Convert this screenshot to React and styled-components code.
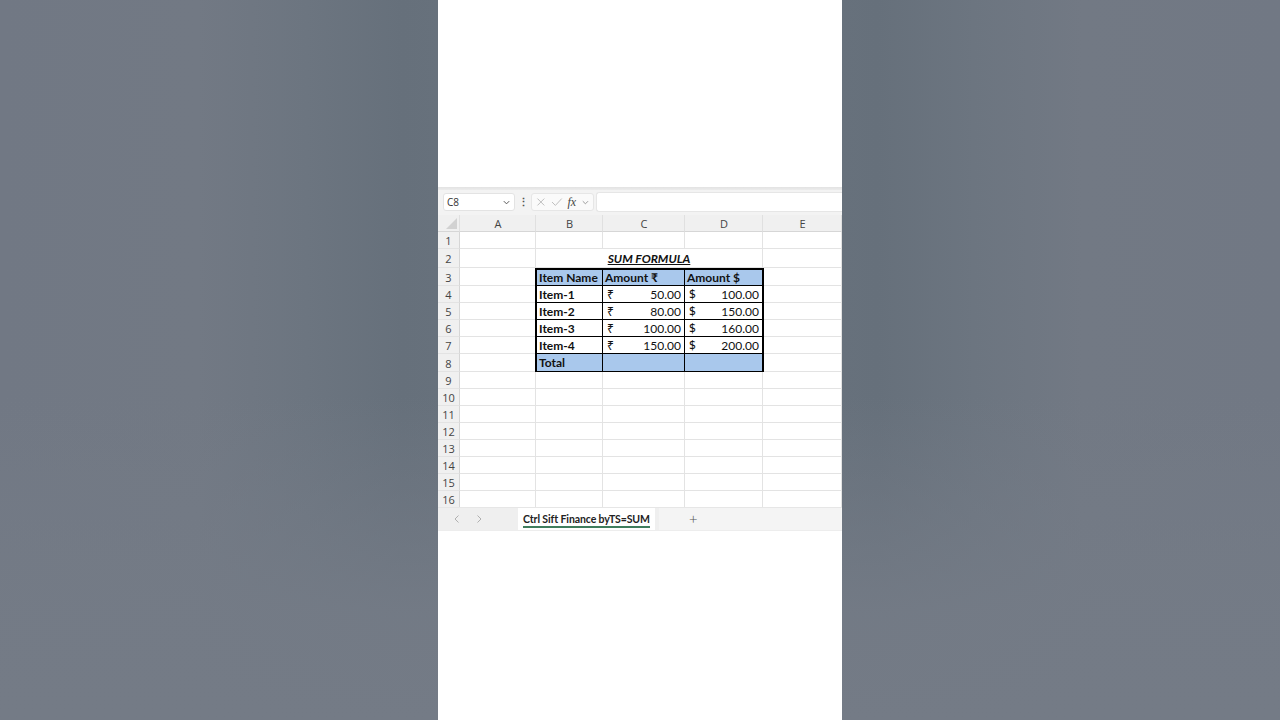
import React from "react";
import styled, { createGlobalStyle } from "styled-components";

const GlobalStyle = createGlobalStyle`
  html, body { margin: 0; padding: 0; }
  body { width: 1280px; height: 720px; overflow: hidden; background: #727984; font-family: "Open Sans", "Noto Sans", sans-serif; }
`;

const Page = styled.div`
  display: flex;
  width: 1280px;
  height: 720px;
`;

const Side = styled.div`
  flex: 0 0 438px;
  height: 720px;
  background:
    linear-gradient(to bottom, rgba(116,123,134,0) 55%, rgba(116,123,134,0.9) 85%, #747b86 100%),
    linear-gradient(${(p) => (p.$right ? "to left" : "to right")}, #717884 0%, #727984 45%, #6c7580 70%, #66707b 92%, #67717c 100%);
`;

const Center = styled.div`
  flex: 0 0 404px;
  display: flex;
  flex-direction: column;
  background: #ffffff;
`;

const TopBlank = styled.div`
  height: 187px;
  background: #ffffff;
`;

const RibbonEdge = styled.div`
  height: 3px;
  background: linear-gradient(to bottom, #e2e2e2, #ececec);
`;

const FormulaBar = styled.div`
  height: 25px;
  display: flex;
  align-items: center;
  padding: 0 0 1px 5px;
  background: #f3f3f3;
  box-sizing: border-box;
`;

const NameBox = styled.div`
  width: 72px;
  height: 18px;
  box-sizing: border-box;
  background: #fff;
  border: 1px solid #e3e3e3;
  border-radius: 3px;
  display: flex;
  align-items: center;
  justify-content: space-between;
  padding: 0 3px 0 3px;
  font-size: 10px;
  color: #333;
  font-family: "Open Sans", "Noto Sans", sans-serif;
`;

const Dots = styled.div`
  width: 16px;
  text-align: center;
  color: #555;
  font-size: 11px;
  font-weight: 700;
  line-height: 18px;
`;

const FxBox = styled.div`
  width: 63px;
  height: 18px;
  box-sizing: border-box;
  background: #fafafa;
  border: 1px solid #e6e6e6;
  border-radius: 3px;
  display: flex;
  align-items: center;
  gap: 5px;
  padding: 0 3px 0 4px;
`;

const FxText = styled.span`
  font-family: "Liberation Serif", "DejaVu Serif", serif;
  font-style: italic;
  font-size: 12px;
  color: #444;
  line-height: 1;
`;

const FormulaInput = styled.div`
  flex: 1;
  height: 18px;
  margin-left: 2px;
  background: #fff;
  border: 1px solid #e6e6e6;
  border-right: none;
  border-radius: 3px 0 0 3px;
`;

const Sheet = styled.div`
  display: grid;
  grid-template-columns: 22px 76px 67px 82px 78px 79px;
  grid-template-rows: 17px 17px 19px 18px 17px 17px 17px 17px 18px repeat(8, 17px);
  background: #fff;
  font-family: "Lato", "Noto Sans", sans-serif;
`;

const HeaderCell = styled.div`
  grid-row: 1;
  grid-column: ${(p) => p.$col};
  background: #f0f0f0;
  border-right: 1px solid #e0e0e0;
  border-bottom: 1px solid #d6d6d6;
  box-sizing: border-box;
  display: flex;
  align-items: center;
  justify-content: center;
  padding-left: 1px;
  font-family: "Open Sans", "Noto Sans", sans-serif;
  font-size: 11px;
  color: #444;
  position: relative;
`;

const Corner = styled.div`
  position: absolute;
  right: 2px;
  bottom: 2px;
  width: 0;
  height: 0;
  border-left: 11px solid transparent;
  border-bottom: 11px solid #d2d2d2;
`;

const RowHead = styled.div`
  grid-row: ${(p) => p.$row};
  grid-column: 1;
  background: #f0f0f0;
  border-right: 1px solid #d6d6d6;
  border-bottom: 1px solid #e3e3e3;
  box-sizing: border-box;
  display: flex;
  align-items: center;
  justify-content: center;
  padding-top: 1px;
  font-family: "Open Sans", "Noto Sans", sans-serif;
  font-size: 11px;
  color: #444;
`;

const Cell = styled.div`
  grid-row: ${(p) => p.$row};
  grid-column: ${(p) => p.$col};
  border-right: 1px solid #e3e3e3;
  border-bottom: 1px solid #e3e3e3;
  box-sizing: border-box;
`;

const TitleCell = styled.div`
  grid-row: 3;
  grid-column: 3 / 6;
  border-bottom: 1px solid #e3e3e3;
  border-right: 1px solid #e3e3e3;
  box-sizing: border-box;
  display: flex;
  align-items: center;
  justify-content: center;
  padding: 1px 0 0 0;
  font-size: 12px;
  font-weight: 700;
  font-style: italic;
  text-decoration: underline;
  color: #111;
`;

const Table = styled.div`
  grid-row: 4 / 10;
  grid-column: 3 / 6;
  border: 2px solid #000;
  box-sizing: border-box;
  margin: 0 -1px 0 -1px;
  display: grid;
  grid-template-columns: 66px 82px 77px;
  grid-template-rows: 16px 17px 17px 17px 17px 17px;
  background: #fff;
`;

const TCell = styled.div`
  box-sizing: border-box;
  border-right: ${(p) => (p.$last ? "none" : "1px solid #000")};
  border-bottom: ${(p) => (p.$bottom ? "none" : "1px solid #000")};
  background: ${(p) => (p.$fill ? "#a9c8ec" : "#fff")};
  display: flex;
  align-items: center;
  justify-content: space-between;
  padding: 0 3px 0 2px;
  font-size: 12px;
  font-weight: ${(p) => (p.$bold ? 700 : 400)};
  color: #111;
  white-space: nowrap;
  overflow: hidden;
`;

const Sym = styled.span`
  font-family: "Noto Sans", "DejaVu Sans", sans-serif;
  font-size: 12px;
  padding-left: 2px;
`;

const TabBar = styled.div`
  height: 23px;
  display: flex;
  align-items: stretch;
  background: #efefef;
  border-top: 1px solid #e6e6e6;
  box-sizing: border-box;
  margin-top: -1px;
`;

const NavArrows = styled.div`
  width: 80px;
  display: flex;
  align-items: center;
  gap: 14px;
  padding-left: 15px;
  box-sizing: border-box;
  color: #b5b5b5;
`;

const SheetTab = styled.div`
  width: 137px;
  box-sizing: border-box;
  background: #fff;
  display: flex;
  align-items: center;
  justify-content: center;
  font-family: "Lato", "Noto Sans", sans-serif;
  font-size: 10.5px;
  font-weight: 700;
  color: #222;
`;

const TabLabel = styled.span`
  border-bottom: 2px solid #3f7d5d;
  padding-bottom: 1px;
  margin-top: 3px;
  letter-spacing: -0.1px;
`;

const TabRest = styled.div`
  flex: 1;
  margin-left: 4px;
  background: #f4f4f4;
  display: flex;
  align-items: center;
  padding-left: 30px;
  color: #555;
  font-size: 15px;
  font-family: "Open Sans", sans-serif;
  font-weight: 300;
`;

const BottomBlank = styled.div`
  flex: 1;
  background: #fff;
  border-top: 1px solid #ededed;
`;

const Chevron = ({ color = "#555" }) => (
  <svg width="9" height="9" viewBox="0 0 10 10">
    <path d="M2 3.5 L5 6.5 L8 3.5" fill="none" stroke={color} strokeWidth="1.1" />
  </svg>
);

const CrossIcon = () => (
  <svg width="10" height="10" viewBox="0 0 10 10">
    <path d="M1.5 1.5 L8.5 8.5 M8.5 1.5 L1.5 8.5" stroke="#bdbdbd" strokeWidth="1" />
  </svg>
);

const CheckIcon = () => (
  <svg width="12" height="10" viewBox="0 0 12 10">
    <path d="M1 5 L4.5 8.5 L11 1.5" fill="none" stroke="#bdbdbd" strokeWidth="1" />
  </svg>
);

const ArrowIcon = ({ dir }) => (
  <svg width="8" height="10" viewBox="0 0 8 10">
    <path d={dir === "left" ? "M5.5 1.5 L2 5 L5.5 8.5" : "M2.5 1.5 L6 5 L2.5 8.5"} fill="none" stroke="#b0b0b0" strokeWidth="1" />
  </svg>
);

const cols = ["A", "B", "C", "D", "E"];
const items = [
  ["Item-1", "50.00", "100.00"],
  ["Item-2", "80.00", "150.00"],
  ["Item-3", "100.00", "160.00"],
  ["Item-4", "150.00", "200.00"],
];

export default function App() {
  const cells = [];
  for (let r = 1; r <= 16; r++) {
    const gridRow = r + 1;
    cells.push(<RowHead key={`rh${r}`} $row={gridRow}>{r}</RowHead>);
    for (let c = 0; c < 5; c++) {
      const inTable = r >= 3 && r <= 8 && c >= 1 && c <= 3;
      const inTitle = r === 2 && c >= 1 && c <= 3;
      if (inTable || inTitle) continue;
      cells.push(<Cell key={`c${r}-${c}`} $row={gridRow} $col={c + 2} />);
    }
  }

  return (
    <>
      <GlobalStyle />
      <Page>
        <Side />
        <Center>
          <TopBlank />
          <RibbonEdge />
          <FormulaBar>
            <NameBox>
              <span>C8</span>
              <Chevron />
            </NameBox>
            <Dots>⋮</Dots>
            <FxBox>
              <CrossIcon />
              <CheckIcon />
              <FxText>fx</FxText>
              <Chevron color="#999" />
            </FxBox>
            <FormulaInput />
          </FormulaBar>
          <Sheet>
            <HeaderCell $col={1}>
              <Corner />
            </HeaderCell>
            {cols.map((c, i) => (
              <HeaderCell key={c} $col={i + 2}>{c}</HeaderCell>
            ))}
            {cells}
            <TitleCell>SUM FORMULA</TitleCell>
            <Table>
              <TCell $fill $bold>Item Name</TCell>
              <TCell $fill $bold>Amount ₹</TCell>
              <TCell $fill $bold $last>Amount $</TCell>
              {items.map(([name, inr, usd]) => (
                <React.Fragment key={name}>
                  <TCell $bold>{name}</TCell>
                  <TCell>
                    <Sym>₹</Sym>
                    <span>{inr}</span>
                  </TCell>
                  <TCell $last>
                    <Sym>$</Sym>
                    <span>{usd}</span>
                  </TCell>
                </React.Fragment>
              ))}
              <TCell $fill $bold $bottom>Total</TCell>
              <TCell $fill $bottom />
              <TCell $fill $bottom $last />
            </Table>
          </Sheet>
          <TabBar>
            <NavArrows>
              <ArrowIcon dir="left" />
              <ArrowIcon dir="right" />
            </NavArrows>
            <SheetTab>
              <TabLabel>Ctrl Sift Finance byTS=SUM</TabLabel>
            </SheetTab>
            <TabRest>+</TabRest>
          </TabBar>
          <BottomBlank />
        </Center>
        <Side $right />
      </Page>
    </>
  );
}
